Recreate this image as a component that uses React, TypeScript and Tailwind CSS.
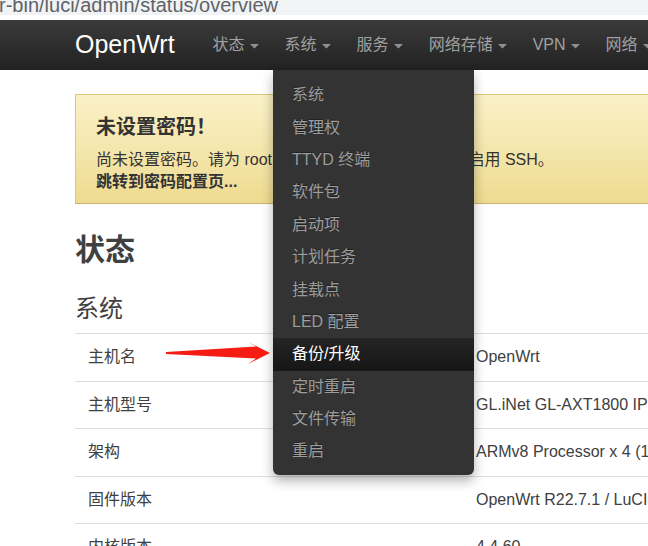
import React from 'react';

const navItems = ['状态', '系统', '服务', '网络存储', 'VPN', '网络'];

const systemMenu = [
  '系统',
  '管理权',
  'TTYD 终端',
  '软件包',
  '启动项',
  '计划任务',
  '挂载点',
  'LED 配置',
  '备份/升级',
  '定时重启',
  '文件传输',
  '重启',
];

const rows = [
  { label: '主机名', value: 'OpenWrt' },
  { label: '主机型号', value: 'GL.iNet GL-AXT1800 IPQ6000' },
  { label: '架构', value: 'ARMv8 Processor x 4 (1200 MHz)' },
  { label: '固件版本', value: 'OpenWrt R22.7.1 / LuCI Master' },
  { label: '内核版本', value: '4.4.60' },
];

function Caret() {
  return (
    <svg width="9" height="5" viewBox="0 0 9 5" className="ml-[5px] mt-[2px]">
      <path d="M0 0 L9 0 L4.5 4.5 Z" fill="#8f8f8f" />
    </svg>
  );
}

export default function App() {
  return (
    <div
      className="relative w-full h-[546px] overflow-hidden bg-white text-[#404040]"
      style={{ fontFamily: '"Liberation Sans", "Noto Sans CJK SC", sans-serif' }}
    >
      {/* browser url strip */}
      <div className="h-[15px] bg-[#f1f3f4] overflow-hidden">
        <div className="text-[20px] leading-[20px] -mt-[5px] -ml-[1px] text-[#5f6368] whitespace-nowrap">
          r-bin/luci/admin/status/overview
        </div>
      </div>
      <div className="h-[5px] bg-white" />

      {/* Navbar */}
      <div className="h-[50px] bg-gradient-to-b from-[#3b3b3b] to-[#222222] flex items-center whitespace-nowrap">
        <div className="ml-[75px] text-[25px] text-white leading-none -mt-[2px]">OpenWrt</div>
        <div className="flex items-center ml-[25px]">
          {navItems.map(item => (
            <div key={item} className="flex items-center px-[13px] text-[16px] text-[#a0a0a0]">
              {item}
              <Caret />
            </div>
          ))}
        </div>
      </div>

      {/* Content */}
      <div className="ml-[75px] w-[1000px]">
        <div className="mt-[24px] border border-[#dcc67f] border-b-[#c9b475] bg-gradient-to-b from-[#fbf1c8] to-[#eedb90] pl-[20px] pt-[17px] pb-[10px]">
          <div className="text-[20px] leading-[30px] font-bold text-[#333]">未设置密码！</div>
          <div className="mt-[7px] text-[16px] leading-[22px] text-[#333]">
            尚未设置密码。请为 root 用户设置密码以保护主机并启用 SSH。
          </div>
          <div className="text-[16px] leading-[22px] font-bold text-[#333]">跳转到密码配置页...</div>
        </div>

        <h2 className="mt-[26px] text-[30px] leading-[40px] font-bold text-[#404040]">状态</h2>
        <h3 className="mt-[23px] text-[24px] leading-[32px] text-[#404040]">系统</h3>

        <div className="mt-[8px] border-t border-[#ddd]">
          {rows.map(r => (
            <div key={r.label} className="grid grid-cols-[388px_1fr] h-[47.5px] items-center border-b border-[#ddd] text-[16px]">
              <div className="pl-[13px]">{r.label}</div>
              <div className="pl-[13px] whitespace-nowrap">{r.value}</div>
            </div>
          ))}
        </div>
      </div>

      {/* System dropdown */}
      <div className="absolute left-[273px] top-[70px] w-[201px] bg-[#333333] rounded-b-[6px] pt-[9px] pb-[7px] shadow-[0_6px_12px_rgba(0,0,0,0.3)]">
        {systemMenu.map(item => {
          const active = item === '备份/升级';
          return (
            <div
              key={item}
              className={
                active
                  ? 'h-[32.4px] flex items-center pl-[19px] text-[16px] text-white bg-gradient-to-b from-[#242424] to-[#161616]'
                  : 'h-[32.4px] flex items-center pl-[19px] text-[16px] text-[#9d9d9d] [text-shadow:0_-1px_0_rgba(0,0,0,0.35)]'
              }
            >
              {item}
            </div>
          );
        })}
      </div>

      {/* annotation arrow */}
      <svg className="absolute left-[160px] top-[336px]" width="116" height="34" viewBox="160 336 116 34">
        <path d="M166 352 L256 346.5 L248 342 L270 353 L248 364 L256 358.5 L166 354 Z" fill="#f51c14" />
      </svg>
    </div>
  );
}
